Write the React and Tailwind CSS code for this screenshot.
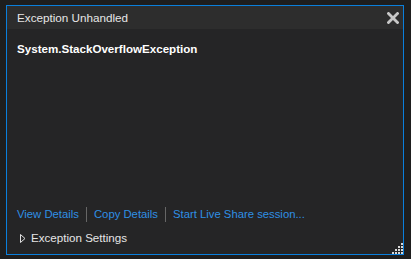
import React from 'react';

const FONT = { fontFamily: '"Liberation Sans", Arial, sans-serif' };

const CloseIcon = () => (
  <svg width="12" height="12" viewBox="0 0 12 12">
    <path d="M1.5 1.5 L10.5 10.5 M10.5 1.5 L1.5 10.5" stroke="#c8c8c8" strokeWidth="2.8" strokeLinecap="square" />
  </svg>
);

const Grip = () => {
  const dots = [];
  for (let row = 0; row < 4; row++) {
    for (let col = 3 - row; col < 4; col++) {
      dots.push(<rect key={`${row}-${col}`} x={col * 3} y={row * 3} width="2" height="2" fill="#d8d8d8" />);
    }
  }
  return (
    <svg width="11" height="11" viewBox="0 0 11 11">
      {dots}
    </svg>
  );
};

const Links = ({ items }) => (
  <div className="flex items-center text-[11.3px] leading-[16px] text-[#2f8fe4]">
    {items.map((label, i) => (
      <React.Fragment key={label}>
        {i > 0 && <span className="mx-[7px] h-[15px] w-px bg-[#666666]" />}
        <span className="cursor-pointer hover:underline">{label}</span>
      </React.Fragment>
    ))}
  </div>
);

export default function App() {
  return (
    <div className="w-[411px] h-[259px] bg-[#1e1e1e] pt-[5px] pl-[6px]" style={FONT}>
      <div className="w-[398px] h-[250px] bg-[#0a7fdc] p-px">
        <div className="h-full bg-[#252526] flex flex-col relative">
          <div className="h-[23px] bg-[#2d2d2d] flex items-center justify-between pl-[10px] pr-[2px]">
            <span className="text-[11.7px] text-[#e6e6e6]">Exception Unhandled</span>
            <button className="w-[16px] h-[16px] flex items-center justify-center"><CloseIcon /></button>
          </div>

          <div className="px-[10px] pt-[11px] text-[11.6px] font-bold text-white">System.StackOverflowException</div>

          <div className="flex-1" />

          <div className="px-[10px] pb-[8px] flex flex-col gap-[8px]">
            <Links items={['View Details', 'Copy Details', 'Start Live Share session...']} />
            <div className="flex items-center gap-[5px] pl-[3px] text-[11.6px] leading-[16px] text-[#e6e6e6]">
              <svg width="6" height="9" viewBox="0 0 6 9">
                <path d="M0.5 0.5 L5 4.5 L0.5 8.5 Z" fill="none" stroke="#e0e0e0" strokeWidth="1" />
              </svg>
              <span>Exception Settings</span>
            </div>
          </div>

          <div className="absolute right-0 bottom-0"><Grip /></div>
        </div>
      </div>
    </div>
  );
}
